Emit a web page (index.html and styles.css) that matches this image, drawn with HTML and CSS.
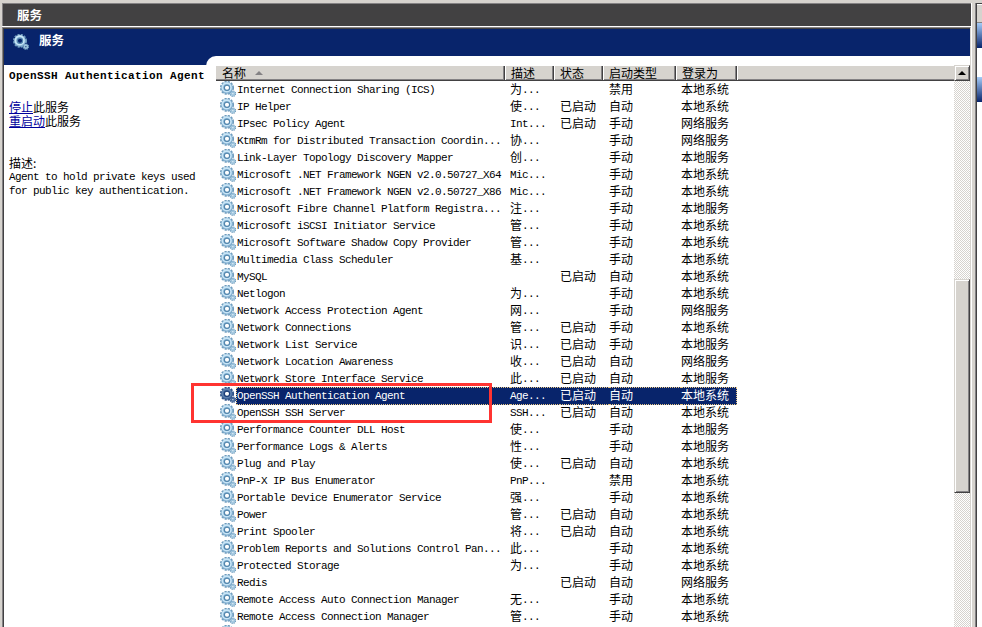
FILE: index.html
```html
<!DOCTYPE html>
<html lang="zh-CN">
<head>
<meta charset="utf-8">
<title>服务</title>
<link rel="stylesheet" href="styles.css">
</head>
<body>
<svg class="defs" width="0" height="0" aria-hidden="true">
  <symbol id="gears" viewBox="0 0 16 16">
    <circle class="teeth" cx="7" cy="6.8" r="6.1" stroke-width="1.9" stroke-dasharray="2.2 .99"/>
    <circle class="ring" cx="7" cy="6.8" r="4.2" stroke-width="3.4"/>
    <circle class="shine" cx="6.7" cy="6.4" r="4.3" stroke-width="1.6"/>
    <circle class="hub" cx="7" cy="6.8" r="2.6" stroke-width="1.1"/>
    <circle class="teeth" cx="12.9" cy="12.7" r="2.6" stroke-width="1.4" stroke-dasharray="1.3 .74"/>
    <circle class="small" cx="12.9" cy="12.7" r="1.5" stroke-width="1.8"/>
  </symbol>
</svg>
<div class="window">
  <main class="main">
    <header class="caption">服务</header>
    <section class="pane">
      <div class="banner"><svg class="gear"><use href="#gears"/></svg><span>服务</span></div>
      <div class="body">
        <aside class="side">
          <h1>OpenSSH Authentication Agent</h1>
          <p class="actions"><a>停止</a>此服务<br><a>重启动</a>此服务</p>
          <p class="label">描述:</p>
          <p class="desc">Agent to hold private keys used<br>for public key authentication.</p>
        </aside>
        <div class="list">
          <div class="head"><span class="h-name">名称<i class="sort"></i></span><span>描述</span><span>状态</span><span>启动类型</span><span>登录为</span></div>
          <div class="rows" id="rows"></div>
        </div>
        <div class="scroll"><div class="up"><i></i></div><div class="thumb"></div></div>
      </div>
    </section>
  </main>
  <aside class="right"><div class="r-head"></div><div class="grad"></div><div class="gap"></div><div class="grad"></div></aside>
</div>
<div class="mark"></div>
<script src="rows.js"></script>
</body>
</html>
```
FILE: styles.css
```css
* { box-sizing: border-box; }
body {
  margin: 0; width: 982px; height: 627px; overflow: hidden; position: relative;
  background: #d6d3ce; color: #000;
  font: 12px/17px "Noto Sans CJK SC", sans-serif;
}
h1, p { margin: 0; font-weight: normal; }
.defs { display: block; height: 0; }
.window { display: flex; height: 627px; padding-top: 3px; }
.main { width: 970px; margin-left: 2px; display: flex; flex-direction: column; background: #fff; }
.caption {
  height: 23px; flex: none; padding-left: 14px; margin-right: 1px; background: #424142; color: #fff;
  border-left: 1px solid #848284; border-top: 1px solid #848284;
  font-weight: bold; line-height: 21px; font-size: 12.5px;
}
.pane {
  flex: 1; min-height: 0; margin-top: 1px; display: flex; flex-direction: column;
  border-left: 1px solid #848284; border-top: 1px solid #848284;
  border-right: 1px solid #d6d3ce; background: #fff; margin-right: 1px;
  box-shadow: inset 1px 1px #424142;
}
.banner {
  height: 36px; flex: none; margin: 1px 0 0 1px; background: #08246b; color: #fff;
  display: flex; padding: 5px 0 0 9px; font-weight: bold; font-size: 12.5px;
}
.banner span { margin-left: 10px; margin-top: -3px; }
.gear { width: 16px; height: 16px; flex: none; }
.teeth { stroke: var(--teeth, #6f9cbd); fill: none; }
.ring { stroke: var(--ring, #86b2d2); fill: none; }
.shine { stroke: var(--shine, #c9e6f7); fill: none; }
.hub { stroke: var(--hub, #5286ad); fill: none; }
.small { stroke: var(--small, #9cc3dc); fill: none; }
.body { flex: 1; min-height: 0; display: flex; }
.side { width: 212px; flex: none; padding: 3px 0 0 6px; white-space: nowrap; }
.side h1 {
  font: bold 11px/16px "Liberation Mono", monospace; letter-spacing: .4px;
}
.side p { line-height: 14px; }
.side .actions { margin-top: 16px; }
.side a { color: #00009c; text-decoration: underline; }
.side .label { margin-top: 28px; }
.lat, .side .desc { font-family: "Liberation Mono", monospace; font-size: 11px; letter-spacing: -.6px; font-weight: normal; }
.list {
  flex: 1; min-width: 0; margin: -9px 0 0 -9px; padding: 10px 0 0 10px;
  background: #fff; border-top-left-radius: 10px;
}
.head {
  display: grid; grid-template-columns: 289px 49px 49px 73px 61px 1fr;
  height: 15px; background: #d6d3ce; border-bottom: 1px solid #424142;
  box-shadow: inset 0 -1px #848284; line-height: 14px;
}
.head span { padding-left: 6px; border-right: 1px solid #424142; box-shadow: 1px 0 #fff, inset -1px 0 #848284; white-space: nowrap; }
.sort { display: inline-block; margin: 0 0 3px 9px; border: 4px solid transparent; border-top: 0; border-bottom-color: #848284; }
.rows { padding-left: 4px; }
.row {
  display: grid; grid-template-columns: 16px 274px 50px 49px 72px 56px; width: 517px;
  height: 17px; line-height: 15px; white-space: nowrap;
}
.row > span:first-of-type { padding-left: 1px; }
.row .lat { position: relative; top: -1px; }
.sel > span { background: #08246b; color: #fff; border: dotted #e7c684; border-width: 1px 0; line-height: 13px; }
.sel > span:first-of-type { border-left-width: 1px; padding-left: 0; }
.sel > span:last-of-type { border-right-width: 1px; }
.sel .gear { --teeth: #2c4f86; --ring: #3a5f96; --shine: #5d80ad; --hub: #1c3d78; --small: #46699c; }
.scroll {
  width: 16px; flex: none; display: flex; flex-direction: column;
  margin-top: -9px; border-top: 9px solid #fff;
  background: repeating-conic-gradient(#d6d3ce 0 25%, #fff 0 50%) 0 0 / 2px 2px;
}
.up, .thumb {
  background: #d6d3ce; border: 1px solid; border-color: #d6d3ce #424142 #424142 #d6d3ce;
  box-shadow: inset 1px 1px #fff, inset -1px -1px #848284;
}
.up { height: 16px; display: flex; justify-content: center; align-items: center; }
.up i { border: 4px solid transparent; border-top: 0; border-bottom-color: #000; }
.thumb { height: 214px; margin-top: 198px; }
.right { width: 6px; margin-left: 4px; background: #fff; border-left: 1px solid #424142; border-top: 1px solid #424142; box-shadow: -1px 0 #848284; }
.r-head { height: 19px; background: #d6d3ce; border-top: 1px solid #fff; border-bottom: 1px solid #848284; }
.grad { height: 25px; background: linear-gradient(#a5cbf7, #08246b); }
.gap { height: 29px; }
.mark { position: absolute; left: 191px; top: 383px; width: 301px; height: 40px; border: 3px solid #ff3431; }
```
FILE: rows.js
```js
const services = `Internet Connection Sharing (ICS)|为...||禁用|本地系统
IP Helper|使...|已启动|自动|本地系统
IPsec Policy Agent|Int...|已启动|手动|网络服务
KtmRm for Distributed Transaction Coordin...|协...||手动|网络服务
Link-Layer Topology Discovery Mapper|创...||手动|本地服务
Microsoft .NET Framework NGEN v2.0.50727_X64|Mic...||手动|本地系统
Microsoft .NET Framework NGEN v2.0.50727_X86|Mic...||手动|本地系统
Microsoft Fibre Channel Platform Registra...|注...||手动|本地服务
Microsoft iSCSI Initiator Service|管...||手动|本地系统
Microsoft Software Shadow Copy Provider|管...||手动|本地系统
Multimedia Class Scheduler|基...||手动|本地系统
MySQL||已启动|自动|本地系统
Netlogon|为...||手动|本地系统
Network Access Protection Agent|网...||手动|网络服务
Network Connections|管...|已启动|手动|本地系统
Network List Service|识...|已启动|手动|本地服务
Network Location Awareness|收...|已启动|自动|网络服务
Network Store Interface Service|此...|已启动|自动|本地服务
OpenSSH Authentication Agent|Age...|已启动|自动|本地系统
OpenSSH SSH Server|SSH...|已启动|自动|本地系统
Performance Counter DLL Host|使...||手动|本地服务
Performance Logs & Alerts|性...||手动|本地服务
Plug and Play|使...|已启动|自动|本地系统
PnP-X IP Bus Enumerator|PnP...||禁用|本地系统
Portable Device Enumerator Service|强...||手动|本地系统
Power|管...|已启动|自动|本地系统
Print Spooler|将...|已启动|自动|本地系统
Problem Reports and Solutions Control Pan...|此...||手动|本地系统
Protected Storage|为...||手动|本地系统
Redis||已启动|自动|网络服务
Remote Access Auto Connection Manager|无...||手动|本地系统
Remote Access Connection Manager|管...||手动|本地系统
||||`.split("\n");
const wrap = t => t.replace(/[\x20-\x7e]+/g, m => `<b class="lat">${m.replace(/&/g, "&amp;")}</b>`);
document.getElementById("rows").innerHTML = services.map((line, i) => {
  const cells = line.split("|").map(t => `<span>${wrap(t)}</span>`).join("");
  return `<div class="row${i === 18 ? " sel" : ""}"><svg class="gear"><use href="#gears"/></svg>${cells}</div>`;
}).join("");
```
